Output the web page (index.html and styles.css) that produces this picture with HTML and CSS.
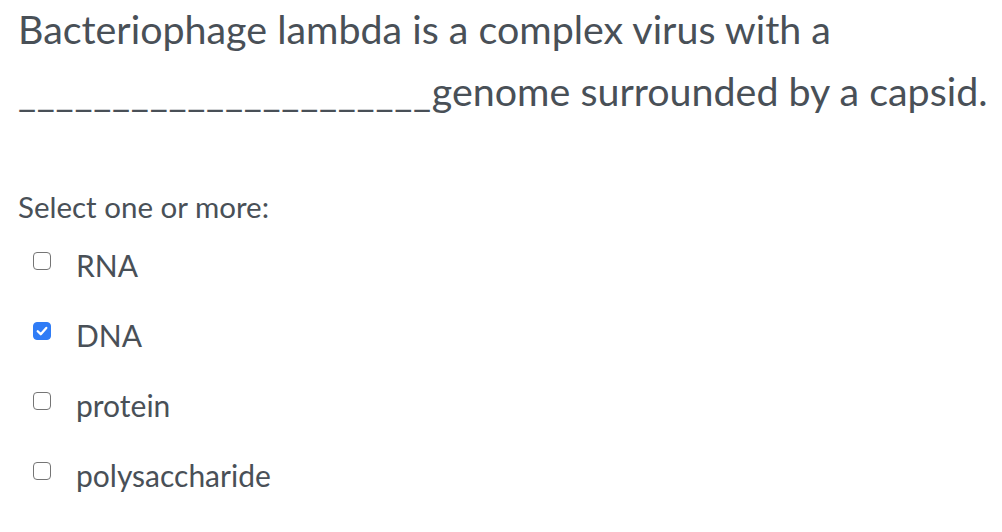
FILE: index.html
```html
<!DOCTYPE html>
<html lang="en">
<head>
<meta charset="utf-8">
<title>Question</title>
<link rel="stylesheet" href="styles.css">
</head>
<body>
<div class="que">
  <div class="qtext">Bacteriophage lambda is a complex virus with a <span class="blank">______________________</span>genome surrounded by a capsid.</div>
  <div class="ablock">
    <div class="prompt">Select one or more:</div>
    <div class="answer">
      <label class="opt"><span class="box"></span><span class="lbl">RNA</span></label>
      <label class="opt"><span class="box checked"><svg viewBox="0 0 18 18" width="18" height="18"><path d="M4.2 9.3 L7.6 12.6 L13.8 5.6" fill="none" stroke="#fff" stroke-width="2.6" stroke-linecap="round" stroke-linejoin="round"/></svg></span><span class="lbl">DNA</span></label>
      <label class="opt"><span class="box"></span><span class="lbl">protein</span></label>
      <label class="opt"><span class="box"></span><span class="lbl">polysaccharide</span></label>
    </div>
  </div>
</div>
</body>
</html>
```
FILE: styles.css
```css
html,body{margin:0;padding:0;background:#fff;}
body{font-family:Lato,"Open Sans",sans-serif;color:#495057;}
.que{padding:0 18px;}
.qtext{font-size:39.4px;line-height:61.5px;margin-top:-2px;width:970px;}
.blank{letter-spacing:0.73px;}
.ablock{margin-top:69px;}
.prompt{font-size:29.5px;line-height:34px;}
.answer{display:flex;flex-direction:column;margin-top:6px;}
.opt{display:flex;align-items:center;height:70px;}
.box{box-sizing:border-box;width:18px;height:18px;border:1.5px solid #757575;border-radius:4px;margin:0 25px 9px 15px;display:flex;align-items:center;justify-content:center;background:#fff;flex:none;}
.box.checked{background:#2f7cf6;border-color:#2f7cf6;}
.box svg{display:block;}
.lbl{font-size:30px;line-height:34px;}
```
